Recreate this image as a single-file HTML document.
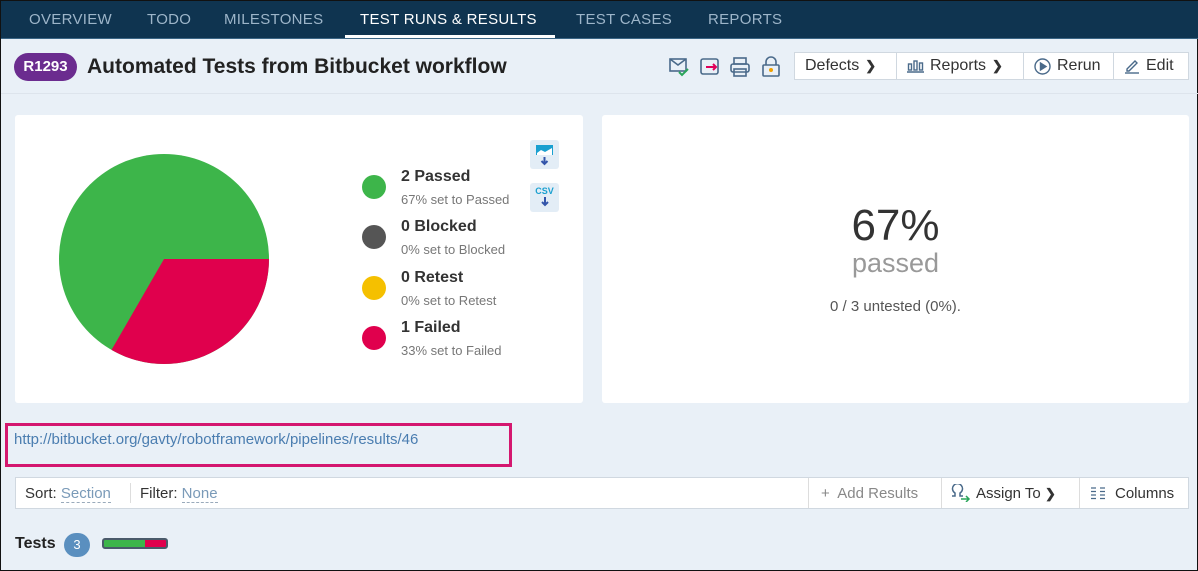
<!DOCTYPE html>
<html><head><meta charset="utf-8"><style>
*{box-sizing:border-box;margin:0;padding:0}
body{width:1198px;height:571px;overflow:hidden;background:#e9f0f7;font-family:"Liberation Sans",sans-serif;position:relative;border:1px solid #111;}
.nav{position:absolute;left:0;top:0;width:1198px;height:38px;background:#0f3450;border-bottom:1px solid #3a6585}
.nav span{position:absolute;top:10px;font-size:15px;letter-spacing:0.3px;color:#9db5c9}
.nav .act{color:#fff}
.ul{position:absolute;left:344px;top:34px;width:210px;height:3px;background:#fff}
.hdr{position:absolute;left:0;top:38px;width:1198px;height:55px;border-bottom:1px solid #dde4ec}
.badge{position:absolute;left:13px;top:14px;width:63px;height:28px;border-radius:14px;background:#6b2c8f;color:#fff;font-size:15px;font-weight:bold;text-align:center;line-height:28px}
.title{position:absolute;left:86px;top:16px;font-size:21px;font-weight:bold;color:#222}
.btns{position:absolute;left:793px;top:13px;height:28px;width:395px;background:#fff;border:1px solid #d0d8e0;display:flex;font-size:16px;color:#333}
.btns div{border-right:1px solid #d0d8e0;line-height:26px;padding:0 10px;display:flex;align-items:center;gap:6px}
.card{position:absolute;background:#fff;border-radius:3px}
.dot{position:absolute;width:24px;height:24px;border-radius:50%}
.lt{position:absolute;left:400px;font-size:16px;font-weight:bold;color:#333}
.ls{position:absolute;left:400px;font-size:13px;color:#777}
.tb{position:absolute;left:14px;top:476px;width:1174px;height:32px;background:#fff;border:1px solid #d0d8e0;font-size:15px;color:#333}
.tb span{position:absolute;top:7px}
.lk{color:#7a9ab8;border-bottom:1px dashed #9ab}
</style></head><body>
<div class="nav">
<span style="left:28px">OVERVIEW</span><span style="left:146px">TODO</span><span style="left:223px">MILESTONES</span><span class="act" style="left:359px">TEST RUNS &amp; RESULTS</span><span style="left:575px">TEST CASES</span><span style="left:707px">REPORTS</span>
<div class="ul"></div></div>
<div class="hdr">
<div class="badge">R1293</div>
<div class="title">Automated Tests from Bitbucket workflow</div>
<svg style="position:absolute;left:667px;top:17px" width="115" height="22" viewBox="0 0 115 22" fill="none" stroke-width="1.6">
<rect x="2" y="3" width="16" height="12" stroke="#4a6a8a"/><path d="M2 3l8 6 8-6" stroke="#4a6a8a"/><path d="M11 16l3 3 6-6" stroke="#2aa55a" stroke-width="2"/>
<rect x="33" y="3" width="17" height="15" rx="2" stroke="#4a6a8a"/><path d="M38 11h10M45 8l3 3-3 3" stroke="#e0005a" stroke-width="2"/>
<rect x="66" y="2" width="12" height="6" stroke="#4a6a8a"/><rect x="63" y="8" width="18" height="8" rx="2" stroke="#4a6a8a"/><rect x="66" y="13" width="12" height="7" stroke="#4a6a8a"/>
<path d="M98 9V6a5 5 0 0110 0v3" stroke="#4a6a8a"/><rect x="95" y="9" width="16" height="11" rx="1" stroke="#4a6a8a"/><circle cx="103" cy="14" r="2" fill="#f0a000" stroke="none"/>
</svg>
<div class="btns">
<div style="width:102px">Defects <b style="font-size:13px">&#10095;</b></div>
<div style="width:127px"><svg width="17" height="14" viewBox="0 0 17 14" fill="none" stroke="#4a6a8a" stroke-width="1.4"><rect x="1.5" y="5" width="3" height="6"/><rect x="7" y="2" width="3" height="9"/><rect x="12.5" y="4" width="3" height="7"/><path d="M0 13h17"/></svg> Reports <b style="font-size:13px">&#10095;</b></div>
<div style="width:90px"><svg width="17" height="17" viewBox="0 0 17 17" fill="none" stroke="#4a6a8a" stroke-width="1.4"><circle cx="8.5" cy="8.5" r="7.5"/><path d="M6.5 5v7l5.5-3.5z" fill="#4a6a8a"/></svg> Rerun</div>
<div style="border:none"><svg width="16" height="16" viewBox="0 0 16 16" fill="none" stroke="#4a6a8a" stroke-width="1.4"><path d="M3 11L11 3l2 2-8 8H3z"/><path d="M1 15h14"/></svg> Edit</div>
</div></div>
<div class="card" style="left:14px;top:114px;width:568px;height:288px"></div>
<svg style="position:absolute;left:58px;top:153px" width="210" height="210" viewBox="0 0 210 210">
<circle cx="105" cy="105" r="105" fill="#3db54a"/>
<path d="M105 105L210 105A105 105 0 0 1 52.5 195.9Z" fill="#e0004d"/>
</svg>
<div class="dot" style="left:361px;top:174px;background:#3db54a"></div>
<div class="dot" style="left:361px;top:224px;background:#555"></div>
<div class="dot" style="left:361px;top:275px;background:#f5c000"></div>
<div class="dot" style="left:361px;top:325px;background:#e0004d"></div>
<div class="lt" style="top:167px">2 Passed</div><div class="ls" style="top:191px">67% set to Passed</div>
<div class="lt" style="top:217px">0 Blocked</div><div class="ls" style="top:241px">0% set to Blocked</div>
<div class="lt" style="top:268px">0 Retest</div><div class="ls" style="top:292px">0% set to Retest</div>
<div class="lt" style="top:318px">1 Failed</div><div class="ls" style="top:342px">33% set to Failed</div>
<div style="position:absolute;left:529px;top:139px;width:29px;height:29px;background:#e3edf6;border-radius:3px"><svg width="29" height="29" viewBox="0 0 29 29"><rect x="6" y="5" width="17" height="10" fill="#1aa0d0"/><path d="M7 13l4-3 4 2 7-4v7H7z" fill="#fff"/><path d="M14.5 17v7M11.5 21l3 3 3-3" stroke="#3355aa" stroke-width="2" fill="none"/></svg></div>
<div style="position:absolute;left:529px;top:182px;width:29px;height:29px;background:#e3edf6;border-radius:3px;text-align:center;font-size:9px;font-weight:bold;color:#1aa0d0;line-height:11px;padding-top:3px">CSV<svg style="display:block;margin:0 auto" width="10" height="10" viewBox="0 0 10 10"><path d="M5 0v8M2 5l3 3 3-3" stroke="#3355aa" stroke-width="2" fill="none"/></svg></div>
<div class="card" style="left:601px;top:114px;width:587px;height:288px;text-align:center">
<div style="position:absolute;left:0;width:100%;top:86px;font-size:44px;color:#333">67%</div>
<div style="position:absolute;left:0;width:100%;top:133px;font-size:27px;color:#999">passed</div>
<div style="position:absolute;left:0;width:100%;top:183px;font-size:15px;color:#555">0 / 3 untested (0%).</div>
</div>
<div style="position:absolute;left:4px;top:422px;width:507px;height:44px;border:3px solid #d4176f"></div>
<div style="position:absolute;left:13px;top:430px;font-size:15px;color:#4a7db0">http://bitbucket.org/gavty/robotframework/pipelines/results/46</div>
<div class="tb">
<span style="left:9px">Sort: <span class="lk" style="position:static">Section</span></span>
<div style="position:absolute;left:114px;top:5px;width:1px;height:20px;background:#ddd"></div>
<span style="left:124px">Filter: <span class="lk" style="position:static">None</span></span>
<div style="position:absolute;left:792px;top:0;width:1px;height:30px;background:#ddd"></div>
<span style="left:805px;color:#888">+&nbsp; Add Results</span>
<div style="position:absolute;left:925px;top:0;width:1px;height:30px;background:#ddd"></div>
<svg style="position:absolute;left:935px;top:6px" width="20" height="18" viewBox="0 0 20 18" fill="none" stroke-width="1.5"><path d="M2 14h3V11a5 5 0 115-0v3h3" stroke="#4a6a8a" transform="translate(-1,-2)"/><path d="M10 15h8M15 12l3 3-3 3" stroke="#2aa55a"/></svg>
<span style="left:960px">Assign To <b style="font-size:13px">&#10095;</b></span>
<div style="position:absolute;left:1063px;top:0;width:1px;height:30px;background:#ddd"></div>
<svg style="position:absolute;left:1074px;top:9px" width="16" height="13" viewBox="0 0 16 13" stroke="#4a6a8a" stroke-width="1.3"><path d="M1 1h5M1 4.5h5M1 8h5M1 11.5h5M10 1h5M10 4.5h5M10 8h5M10 11.5h5"/></svg>
<span style="left:1099px">Columns</span>
</div>
<div style="position:absolute;left:14px;top:534px;font-size:16px;font-weight:bold;color:#222">Tests</div>
<div style="position:absolute;left:63px;top:532px;width:26px;height:24px;border-radius:12px;background:#5a8fbf;color:#fff;font-size:13px;text-align:center;line-height:24px">3</div>
<div style="position:absolute;left:101px;top:537px;width:66px;height:11px;border:2px solid #4a5a6a;border-radius:3px;background:linear-gradient(90deg,#3db54a 0 66%,#e0004d 66%)"></div>
</body></html>
